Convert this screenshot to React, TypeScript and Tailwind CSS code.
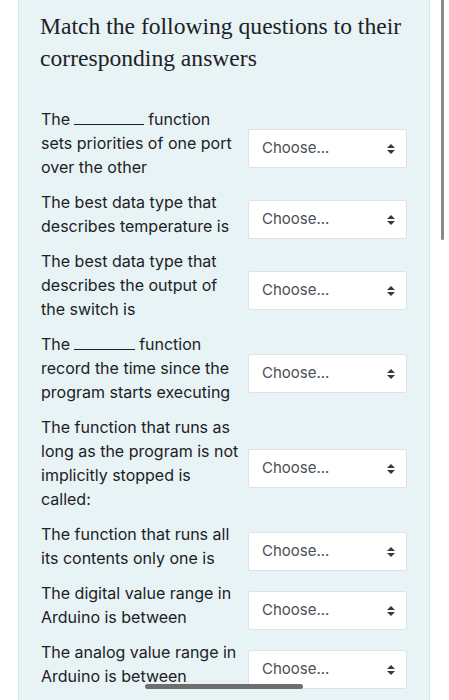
import React from "react";

type Row = { lines: React.ReactNode[] };

const rows: Row[] = [
  {
    lines: [
      <>The<span className="inline-block w-[70px] border-b-[1.5px] border-[#1d2125] h-[16px] mx-[4px]" />function</>,
      "sets priorities of one port",
      "over the other",
    ],
  },
  { lines: ["The best data type that", "describes temperature is"] },
  { lines: ["The best data type that", "describes the output of", "the switch is"] },
  {
    lines: [
      <>The<span className="inline-block w-[61px] border-b-[1.5px] border-[#1d2125] h-[16px] mx-[4px]" />function</>,
      "record the time since the",
      "program starts executing",
    ],
  },
  {
    lines: [
      "The function that runs as",
      "long as the program is not",
      "implicitly stopped is",
      "called:",
    ],
  },
  { lines: ["The function that runs all", "its contents only one is"] },
  { lines: ["The digital value range in", "Arduino is between"] },
  { lines: ["The analog value range in", "Arduino is between"] },
];

const Arrow = () => (
  <svg width="8" height="10" viewBox="0 0 4 5" className="shrink-0">
    <path d="M2 0L0 2h4zm0 5L0 3h4z" fill="#343a40" />
  </svg>
);

export default function App() {
  return (
    <div className="relative w-[449px] h-[700px] bg-white overflow-hidden">
      <div className="ml-[18px] w-[412px] h-[700px] bg-[#e7f3f5] border-l border-r border-[#d4e6eb] pl-[21px] pt-[10px]">
        <h2
          className="text-[#1d2125] text-[23.6px] leading-[32px]"
          style={{ fontFamily: '"Liberation Serif", serif' }}
        >
          Match the following questions to their
          <br />
          corresponding answers
        </h2>
        <div
          className="mt-[33px] ml-[1px] flex flex-col text-[#1d2125]"
          style={{ fontFamily: 'Inter, "Liberation Sans", sans-serif' }}
        >
          {rows.map((r, i) => (
            <div key={i} className="flex items-center">
              <div className="w-[207px] pb-[11px] text-[16px] leading-[24px]">
                {r.lines.map((l, j) => (
                  <div key={j} className="whitespace-nowrap">
                    {l}
                  </div>
                ))}
              </div>
              <div className="w-[159px] h-[39px] bg-white border border-[#dee2e6] rounded-[2px] flex items-center justify-between pl-[13px] pr-[11px]">
                <span className="text-[15px] text-[#495057]">Choose...</span>
                <Arrow />
              </div>
            </div>
          ))}
        </div>
      </div>
      <div className="absolute left-[441px] top-0 w-[3px] h-[240px] bg-[#8a8a8a] rounded-b-full" />
      <div className="absolute left-[145px] top-[684px] w-[158px] h-[5px] bg-[#6e6e6e] rounded-full" />
    </div>
  );
}
